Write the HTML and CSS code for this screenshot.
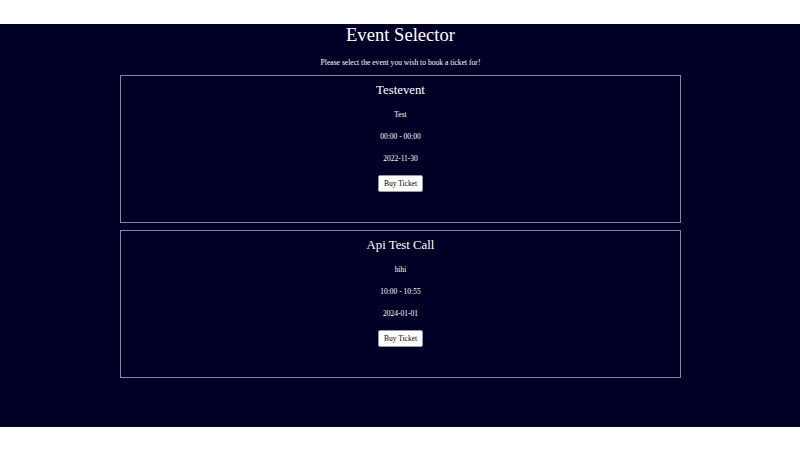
FILE: index.html
```html
<!DOCTYPE html>
<html lang="en">
<head>
<meta charset="utf-8">
<title>Event Selector</title>
<link rel="stylesheet" href="styles.css">
</head>
<body>
<main class="page">
  <h1 class="title">Event Selector</h1>
  <p class="subtitle">Please select the event you wish to book a ticket for!</p>
  <div class="events">
    <section class="card">
      <h2 class="card-title">Testevent</h2>
      <p class="card-line">Test</p>
      <p class="card-line">00:00 - 00:00</p>
      <p class="card-line">2022-11-30</p>
      <button class="buy">Buy Ticket</button>
    </section>
    <section class="card">
      <h2 class="card-title">Api Test Call</h2>
      <p class="card-line">hihi</p>
      <p class="card-line">10:00 - 10:55</p>
      <p class="card-line">2024-01-01</p>
      <button class="buy">Buy Ticket</button>
    </section>
  </div>
</main>
</body>
</html>
```

FILE: styles.css
```css
* { box-sizing: border-box; }

html, body {
  margin: 0;
  padding: 0;
  background: #ffffff;
}

body {
  padding-top: 24px;
  font-family: "Liberation Serif", "Times New Roman", serif;
  color: #ffffff;
}

.page {
  display: block;
  height: 403px;
  background: #000026;
  padding: 2px 119px 0 120px;
  text-align: center;
}

.title {
  margin: 0;
  font-size: 18.6px;
  line-height: 18px;
  font-weight: normal;
}

.subtitle {
  margin: 13.7px 0 0;
  font-size: 7.6px;
  line-height: 9px;
}

.events {
  margin-top: 8.3px;
  display: flex;
  flex-direction: column;
  gap: 7px;
}

.card {
  border: 1px solid #86869f;
  padding: 7px 0 30px;
  display: flex;
  flex-direction: column;
  align-items: center;
}

.card-title {
  margin: 0;
  font-size: 12.8px;
  line-height: 15px;
  font-weight: normal;
}

.card-line {
  margin: 13px 0 0;
  font-size: 7.5px;
  line-height: 9px;
}

.card-title + .card-line {
  margin-top: 12px;
}

.buy {
  margin-top: 12px;
  height: 17px;
  padding: 0 5.4px;
  background: #ffffff;
  color: #000000;
  border: 1px solid #9a9a9a;
  border-radius: 2px;
  font-family: "Liberation Serif", "Times New Roman", serif;
  font-size: 7.5px;
  line-height: 15px;
}
```
